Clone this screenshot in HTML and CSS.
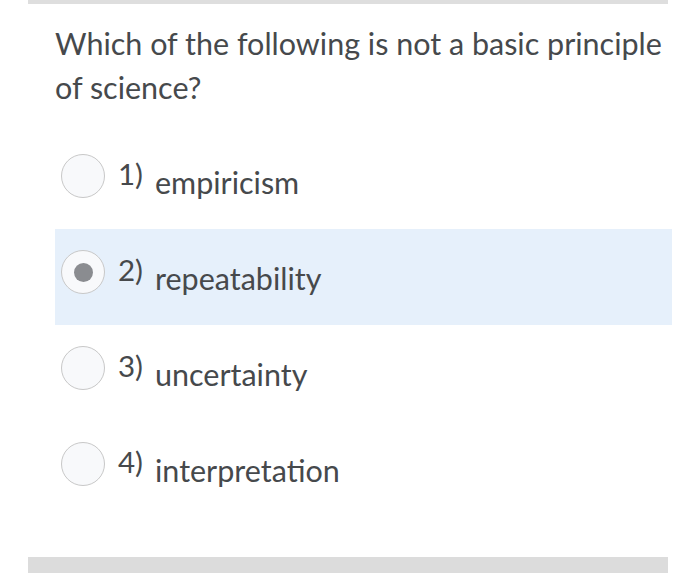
FILE: index.html
```html
<!DOCTYPE html>
<html>
<head>
<meta charset="utf-8">
<link rel="stylesheet" href="styles.css">
</head>
<body>
<div class="topbar"></div>
<div class="content">
  <p class="question">Which of the following is not a basic principle of science?</p>
  <div class="options">
    <div class="option"><span class="radio"></span><span class="num">1)</span><span class="ans">empiricism</span></div>
    <div class="option selected"><span class="radio checked"></span><span class="num">2)</span><span class="ans">repeatability</span></div>
    <div class="option"><span class="radio"></span><span class="num">3)</span><span class="ans">uncertainty</span></div>
    <div class="option"><span class="radio"></span><span class="num">4)</span><span class="ans">interpretation</span></div>
  </div>
</div>
<div class="bottombar"></div>
</body>
</html>
```
FILE: styles.css
```css
html, body { margin: 0; padding: 0; background: #fff; }
body { font-family: Lato, "Noto Sans", sans-serif; color: #46494c; width: 700px; height: 573px; overflow: hidden; }
.topbar { margin: 0 32px 0 28px; height: 4px; background: #dedede; }
.content { padding: 17px 28px 0 55px; height: 553px; box-sizing: border-box; }
.question { margin: 0; font-size: 30.5px; line-height: 44px; width: 620px; }
.options { margin-top: 24px; }
.option { display: flex; align-items: center; height: 96px; padding-left: 6px; }
.option.selected { background: #e6f0fb; }
.radio { width: 44px; height: 44px; margin-bottom: 10px; border: 1.5px solid #c8c8c8; border-radius: 50%; background: #f8f9fb; box-sizing: border-box; display: flex; align-items: center; justify-content: center; flex: none; }
.radio.checked::after { content: ""; width: 19px; height: 19px; border-radius: 50%; background: #8a8c90; }
.num { margin-left: 13px; font-size: 29.5px; position: relative; top: -8px; }
.ans { margin-left: 12px; font-size: 30.5px; position: relative; top: 1px; }
.bottombar { margin: 0 32px 0 28px; height: 16px; background: #dcdcdc; }
```
